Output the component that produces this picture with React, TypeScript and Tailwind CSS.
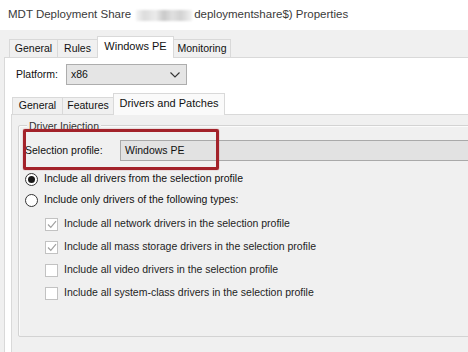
import React from "react";

function Chevron() {
  return (
    <svg width="10" height="6" viewBox="0 0 10 6" fill="none">
      <path d="M0.5 0.5 L5 5 L9.5 0.5" stroke="#333" strokeWidth="1.1" />
    </svg>
  );
}

function Radio({ checked, label }: { checked?: boolean; label: string }) {
  return (
    <div className="flex items-center h-[16px]">
      <div className="w-[13px] h-[13px] rounded-full border border-[#333] bg-white flex items-center justify-center">
        {checked && <div className="w-[7px] h-[7px] rounded-full bg-[#1a1a1a]" />}
      </div>
      <span className="ml-[6px]">{label}</span>
    </div>
  );
}

function Check({ checked, label }: { checked?: boolean; label: string }) {
  return (
    <div className="flex items-center h-[16px]">
      <div className="w-[13px] h-[13px] border border-[#c2c2c2] bg-white flex items-center justify-center">
        {checked && (
          <svg width="10" height="9" viewBox="0 0 10 9" fill="none">
            <path d="M1 4.5 L3.8 7.3 L9 1.2" stroke="#a0a0a0" strokeWidth="1.2" />
          </svg>
        )}
      </div>
      <span className="ml-[6px] text-[#1e1e1e]">{label}</span>
    </div>
  );
}

function Tab({
  label,
  width,
  selected,
  first,
  tall,
  short,
  selBg,
}: {
  label: string;
  width: string;
  selected?: boolean;
  first?: boolean;
  tall: string;
  short: string;
  selBg: string;
}) {
  return (
    <div
      className={
        "flex items-center justify-center whitespace-nowrap border-t border-l border-r border-[#d9d9d9] " +
        width +
        " " +
        (first ? "" : "-ml-px ") +
        (selected ? tall + " relative z-10 -mb-px pb-[3px] text-[11px] " + selBg : short + " bg-[#f0f0f0]")
      }
    >
      {label}
    </div>
  );
}

export default function App() {
  return (
    <div className="relative w-[468px] h-[352px] overflow-hidden bg-[#f0f0f0] font-['Liberation_Sans',Arial,sans-serif] text-[10.5px] text-[#111]">
      {/* title bar */}
      <div className="h-[30px] bg-white flex items-center pl-[8px] text-[11.5px] text-[#3a3a3a] whitespace-nowrap">
        <span>MDT Deployment Share</span>
        <span className="inline-block ml-[5px] mr-[2px] w-[56px] h-[11px] blur-[1px] bg-[linear-gradient(90deg,#f4f4f4,#dcdcdc_15%,#ebebeb_35%,#c9c9c9_50%,#e0e0e0_65%,#d2d2d2_80%,#f2f2f2)]" />
        <span>deploymentshare$) Properties</span>
      </div>

      {/* outer tab control */}
      <div className="pt-[6px] pl-[4px]">
        <div className="flex items-end h-[21px] pl-[5px]">
          <Tab label="General" width="w-[49px]" first tall="h-[22px]" short="h-[18px]" selBg="bg-white" />
          <Tab label="Rules" width="w-[41px]" tall="h-[22px]" short="h-[18px]" selBg="bg-white" />
          <Tab label="Windows PE" width="w-[77px]" selected tall="h-[22px]" short="h-[18px]" selBg="bg-white" />
          <Tab label="Monitoring" width="w-[58px]" tall="h-[22px]" short="h-[18px]" selBg="bg-white" />
        </div>

        <div className="w-[480px] h-[300px] bg-white border border-[#d9d9d9]">
          {/* platform row */}
          <div className="flex items-center pt-[6px] pl-[11px]">
            <span className="w-[50px]">Platform:</span>
            <div className="w-[121px] h-[21px] bg-[#e5e5e5] border border-[#adadad] flex items-center justify-between pl-[4px] pr-[6px]">
              <span>x86</span>
              <Chevron />
            </div>
          </div>

          {/* inner tab control */}
          <div className="mt-[8px] ml-[6px]">
            <div className="flex items-end h-[21px] pl-[1px]">
              <Tab label="General" width="w-[51px]" first tall="h-[22px]" short="h-[17px]" selBg="bg-[#fafafa]" />
              <Tab label="Features" width="w-[52px]" tall="h-[22px]" short="h-[17px]" selBg="bg-[#fafafa]" />
              <Tab label="Drivers and Patches" width="w-[112px]" selected tall="h-[22px]" short="h-[17px]" selBg="bg-[#fafafa]" />
            </div>

            <div className="w-[480px] h-[260px] bg-[#f0f0f0] border border-[#d9d9d9] pt-[10px] pl-[6px]">
              {/* group box */}
              <div className="relative w-[470px] h-[212px] border border-[#d3d3d3] rounded-[2px] shadow-[inset_1px_1px_0_#fbfbfb]">
                <span className="absolute left-[8px] top-[-7px] px-[2px] bg-[#f0f0f0] text-[#333]">
                  Driver Injection
                </span>

                <div className="flex items-center mt-[14px] pl-[6px]">
                  <span className="w-[95px]">Selection profile:</span>
                  <div className="flex-1 h-[21px] bg-[#e2e2e2] border border-[#a9a9a9] flex items-center pl-[4px]">
                    Windows PE
                  </div>
                </div>

                <div className="flex flex-col gap-[5px] mt-[10px] pl-[6px]">
                  <Radio checked label="Include all drivers from the selection profile" />
                  <Radio label="Include only drivers of the following types:" />
                </div>

                <div className="flex flex-col gap-[7px] mt-[8px] pl-[26px]">
                  <Check checked label="Include all network drivers in the selection profile" />
                  <Check checked label="Include all mass storage drivers in the selection profile" />
                  <Check label="Include all video drivers in the selection profile" />
                  <Check label="Include all system-class drivers in the selection profile" />
                </div>
              </div>
            </div>
          </div>
        </div>
      </div>

      {/* red highlight */}
      <div className="absolute left-[23px] top-[129px] w-[196px] h-[41px] border-[3px] border-[#a3222a] rounded-[2px] shadow-[0_0_1px_#a3222a]" />
    </div>
  );
}
